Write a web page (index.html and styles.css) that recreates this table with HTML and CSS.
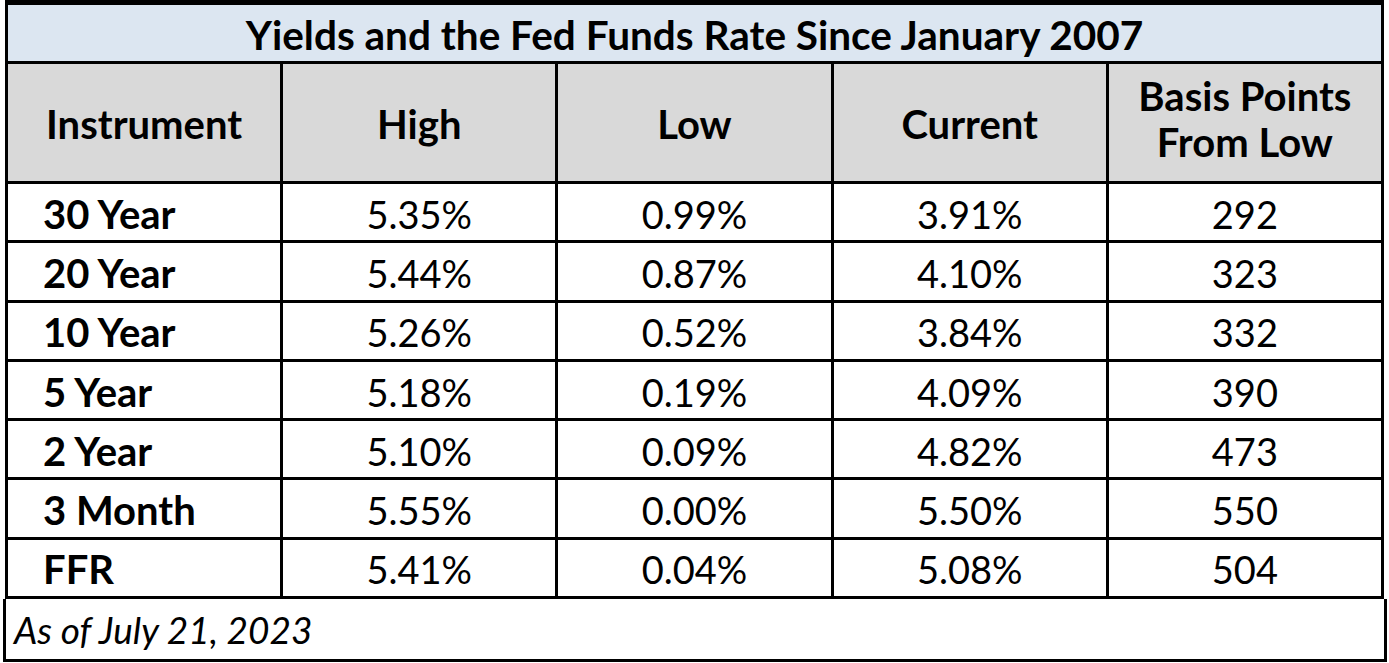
FILE: index.html
```html
<!DOCTYPE html>
<html>
<head>
<meta charset="utf-8">
<link rel="stylesheet" href="styles.css">
</head>
<body>
<div class="page">
  <table class="yields">
    <colgroup>
      <col class="c"><col class="c"><col class="c"><col class="c"><col class="c">
    </colgroup>
    <thead>
      <tr class="title-row"><th colspan="5">Yields and the Fed Funds Rate Since January 2007</th></tr>
      <tr class="head-row">
        <th>Instrument</th>
        <th>High</th>
        <th>Low</th>
        <th>Current</th>
        <th class="two-line">Basis Points<br>From Low</th>
      </tr>
    </thead>
    <tbody>
      <tr><td class="label">30 Year</td><td>5.35%</td><td>0.99%</td><td>3.91%</td><td>292</td></tr>
      <tr><td class="label">20 Year</td><td>5.44%</td><td>0.87%</td><td>4.10%</td><td>323</td></tr>
      <tr><td class="label">10 Year</td><td>5.26%</td><td>0.52%</td><td>3.84%</td><td>332</td></tr>
      <tr><td class="label">5 Year</td><td>5.18%</td><td>0.19%</td><td>4.09%</td><td>390</td></tr>
      <tr><td class="label">2 Year</td><td>5.10%</td><td>0.09%</td><td>4.82%</td><td>473</td></tr>
      <tr><td class="label">3 Month</td><td>5.55%</td><td>0.00%</td><td>5.50%</td><td>550</td></tr>
      <tr><td class="label">FFR</td><td>5.41%</td><td>0.04%</td><td>5.08%</td><td>504</td></tr>
    </tbody>
  </table>
  <div class="footer">As of July 21, 2023</div>
</div>
</body>
</html>
```
FILE: styles.css
```css
html, body {
  margin: 0;
  padding: 0;
  background: #fff;
}
body {
  font-family: Lato, "Open Sans", sans-serif;
  color: #000;
}
.page {
  padding: 0 0 0 3px;
  width: 1384px;
}
.yields {
  margin-left: 2px;
  width: 1379px;
  border-collapse: collapse;
  table-layout: fixed;
  border: 3px solid #000;
  border-top-width: 5px;
}
.yields th,
.yields td {
  border: 3px solid #000;
  padding: 3px 0 0 0;
  text-align: center;
  vertical-align: middle;
  font-size: 38px;
  line-height: 46px;
}
.title-row th {
  background: #dce6f1;
  height: 53px;
  font-weight: 700;
  font-size: 40.5px;
  border-top-width: 5px;
}
.head-row th {
  background: #d9d9d9;
  height: 114px;
  font-weight: 700;
  font-size: 40px;
}
.head-row th.two-line {
  padding: 0 0 7px 0;
  height: 110px;
  line-height: 46px;
}
.yields td {
  height: 53.3px;
  font-weight: 400;
}
.yields td.label {
  text-align: left;
  padding-left: 35px;
  font-weight: 700;
  font-size: 40px;
}
.footer {
  border: 3px solid #000;
  border-top: 0;
  height: 63px;
  box-sizing: border-box;
  padding: 10px 0 0 8px;
  font-size: 37px;
  font-style: italic;
  line-height: 42px;
}
```
